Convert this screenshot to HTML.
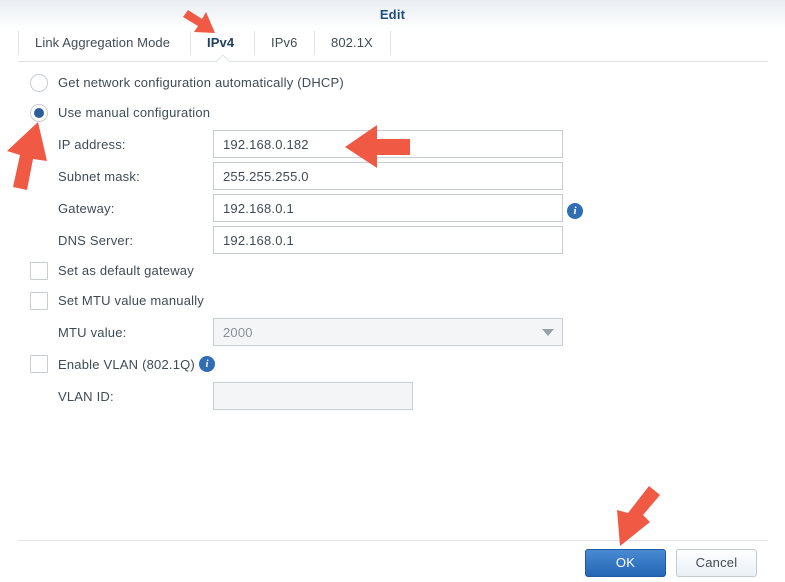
<!DOCTYPE html>
<html><head><style>
*{margin:0;padding:0;box-sizing:border-box}
body{width:785px;height:582px;background:#fff;font-family:"Liberation Sans",sans-serif;font-size:13px;letter-spacing:0.2px;color:#414b55;position:relative;overflow:hidden}
.a{position:absolute}
.hdr{left:0;top:0;width:785px;height:30px;background:linear-gradient(#e9eef3,#fff)}
.title{left:0;width:785px;top:7px;text-align:center;font-weight:bold;color:#1f4f80;font-size:13px}
.tab{top:35px;font-size:13px;color:#414b55;letter-spacing:0.1px}
.sep{top:31px;width:1px;height:24px;background:#dfe3e7}
.inp{left:213px;width:350px;height:28px;border:1px solid #c8cdd2;background:#fff;padding:6px 9px;color:#414b55}
.lbl{left:58px}
.cb{left:30px;width:18px;height:18px;border:1px solid #c8cdd2;background:#fff;border-radius:1px}
.info{width:16px;height:16px;border-radius:50%;background:#2f6db5;color:#fff;font:italic bold 11px "Liberation Serif",serif;text-align:center;line-height:16px;letter-spacing:0}
</style></head><body>
<div class="a hdr"></div>
<div class="a title">Edit</div>
<div class="a sep" style="left:18px"></div>
<div class="a sep" style="left:190px"></div>
<div class="a sep" style="left:254px"></div>
<div class="a sep" style="left:314px"></div>
<div class="a sep" style="left:390px"></div>
<div class="a tab" style="left:35px">Link Aggregation Mode</div>
<div class="a tab" style="left:207px;font-weight:bold;color:#1f3f63">IPv4</div>
<div class="a tab" style="left:271px">IPv6</div>
<div class="a tab" style="left:331px">802.1X</div>
<div class="a" style="left:18px;top:61px;width:750px;height:1px;background:#dfe3e7"></div>
<svg class="a" style="left:216px;top:55px" width="14" height="8"><path d="M0 7 L7 0 L14 7" fill="#fff" stroke="#dfe3e7"/></svg>

<div class="a" style="left:30px;top:74px;width:18px;height:18px;border:1px solid #c8cdd2;border-radius:50%"></div>
<div class="a" style="left:58px;top:75px">Get network configuration automatically (DHCP)</div>
<div class="a" style="left:30px;top:104px;width:18px;height:18px;border:1px solid #c8cdd2;border-radius:50%"></div>
<div class="a" style="left:34px;top:108px;width:10px;height:10px;background:#2d5e9c;border-radius:50%"></div>
<div class="a" style="left:58px;top:105px">Use manual configuration</div>

<div class="a lbl" style="top:137px">IP address:</div><div class="a inp" style="top:130px">192.168.0.182</div>
<div class="a lbl" style="top:169px">Subnet mask:</div><div class="a inp" style="top:162px">255.255.255.0</div>
<div class="a lbl" style="top:201px">Gateway:</div><div class="a inp" style="top:194px">192.168.0.1</div>
<div class="a info" style="left:567px;top:203px">i</div>
<div class="a lbl" style="top:233px">DNS Server:</div><div class="a inp" style="top:226px">192.168.0.1</div>

<div class="a cb" style="top:262px"></div><div class="a lbl" style="top:263px">Set as default gateway</div>
<div class="a cb" style="top:292px"></div><div class="a lbl" style="top:293px">Set MTU value manually</div>
<div class="a lbl" style="top:325px">MTU value:</div>
<div class="a inp" style="top:318px;background:#f3f5f7;color:#8a9097">2000</div>
<svg class="a" style="left:542px;top:329px" width="12" height="7"><path d="M0 0H12L6 7Z" fill="#9aa1a8"/></svg>
<div class="a cb" style="top:355px"></div><div class="a lbl" style="top:357px">Enable VLAN (802.1Q)</div>
<div class="a info" style="left:199px;top:356px">i</div>
<div class="a lbl" style="top:389px">VLAN ID:</div>
<div class="a inp" style="top:382px;width:200px;background:#f3f5f7"></div>

<div class="a" style="left:18px;top:540px;width:750px;height:1px;background:#dfe3e7"></div>
<div class="a" style="left:585px;top:549px;width:81px;height:28px;border:1px solid #1d5ba5;border-radius:3px;background:linear-gradient(#4a8ad3,#2466b5);color:#fff;text-align:center;line-height:26px">OK</div>
<div class="a" style="left:676px;top:549px;width:81px;height:28px;border:1px solid #c3cad1;border-radius:3px;background:linear-gradient(#fdfeff,#eaf0f5);text-align:center;line-height:26px">Cancel</div>

<svg class="a" style="left:0;top:0" width="785" height="582">
<g fill="#f05a45">
<polygon points="183,17 188,10 202,19 206,12 215,33 194,32 198,26"/>
<polygon points="13,187 27,190 33,159 47,161 38,122 7,151 20,155"/>
<polygon points="410,139 410,155 377,155 377,168 345,147 377,125 377,139"/>
<polygon points="649,486 660,495 643,515 650,522 620,546 617,510 628,513"/>
</g>
</svg>
</body></html>
